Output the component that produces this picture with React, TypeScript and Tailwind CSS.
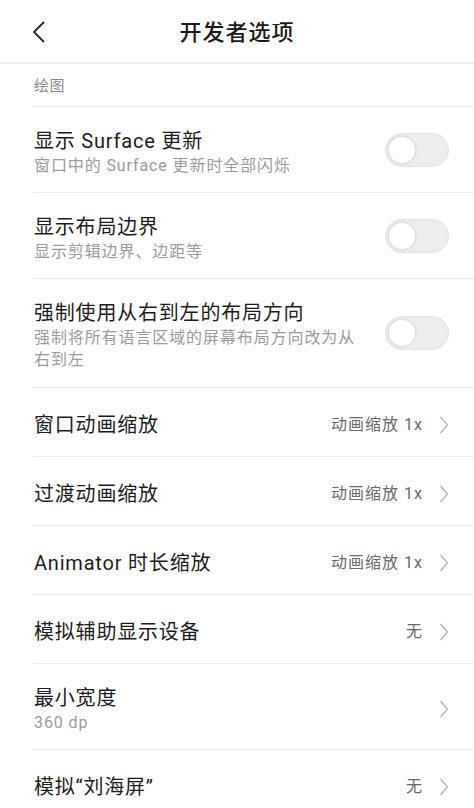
import React from "react";

const font = { fontFamily: 'Roboto, "Noto Sans CJK SC", sans-serif' };

type Item =
  | { kind: "toggle"; title: string; sub: string; h: string }
  | { kind: "link"; title: string; value?: string; sub?: string; h: string };

const items: Item[] = [
  { kind: "toggle", title: "显示 Surface 更新", sub: "窗口中的 Surface 更新时全部闪烁", h: "h-[86px]" },
  { kind: "toggle", title: "显示布局边界", sub: "显示剪辑边界、边距等", h: "h-[86px]" },
  { kind: "toggle", title: "强制使用从右到左的布局方向", sub: "强制将所有语言区域的屏幕布局方向改为从右到左", h: "h-[109px]" },
  { kind: "link", title: "窗口动画缩放", value: "动画缩放 1x", h: "h-[69px]" },
  { kind: "link", title: "过渡动画缩放", value: "动画缩放 1x", h: "h-[69px]" },
  { kind: "link", title: "Animator 时长缩放", value: "动画缩放 1x", h: "h-[69px]" },
  { kind: "link", title: "模拟辅助显示设备", value: "无", h: "h-[69px]" },
  { kind: "link", title: "最小宽度", sub: "360 dp", h: "h-[86px]" },
  { kind: "link", title: "模拟“刘海屏”", value: "无", h: "h-[69px]" },
];

function Toggle() {
  return (
    <div className="w-[64px] h-[34px] rounded-full bg-[#ededed] border border-[#e3e3e3] flex items-center px-[1px] shrink-0">
      <div className="w-[30px] h-[30px] rounded-full bg-white border-2 border-[#e2e2e2]" />
    </div>
  );
}

function Chevron() {
  return (
    <svg width="10" height="18" viewBox="0 0 10 18" className="shrink-0">
      <path d="M1.5 1 L8.5 9 L1.5 17" fill="none" stroke="#b3b3b3" strokeWidth="1.3" />
    </svg>
  );
}

function Row({ item }: { item: Item }) {
  return (
    <div className={`ml-[33px] pl-[1px] pt-[5px] border-b border-[#ececec] flex items-center ${item.h}`}>
      <div className="flex-1 min-w-0 pr-[24px]">
        <div className="text-[20px] leading-[26px] tracking-[0.8px] text-[#1c1c1c]">{item.title}</div>
        {item.sub && (
          <div className="text-[16px] leading-[22px] tracking-[0.9px] text-[#9b9b9b] mt-[1px]">{item.sub}</div>
        )}
      </div>
      {item.kind === "toggle" ? (
        <div className="pr-[25px] -mt-[5px]">
          <Toggle />
        </div>
      ) : (
        <div className="flex items-center gap-[16px] pr-[25px]">
          {item.value && (
            <span className="text-[16px] tracking-[1px] text-[#6a6a6a]">{item.value}</span>
          )}
          <Chevron />
        </div>
      )}
    </div>
  );
}

export default function App() {
  return (
    <div className="w-[474px] h-[808px] overflow-hidden bg-white" style={font}>
      <header className="relative h-[64px] border-b-2 border-[#ececec] flex items-center justify-center">
        <svg width="14" height="22" viewBox="0 0 14 22" className="absolute left-[32px] top-[21px]">
          <path d="M12 1 L2 11 L12 21" fill="none" stroke="#222" strokeWidth="1.8" />
        </svg>
        <h1 className="text-[22px] tracking-[1px] font-medium text-[#1a1a1a] pt-[2px]">开发者选项</h1>
      </header>
      <div className="ml-[33px] pl-[1px] pt-[3px] h-[43px] flex items-center border-b border-[#ececec]">
        <span className="text-[15px] tracking-[0.5px] text-[#8a8a8a]">绘图</span>
      </div>
      {items.map((it, i) => (
        <Row key={i} item={it} />
      ))}
    </div>
  );
}
